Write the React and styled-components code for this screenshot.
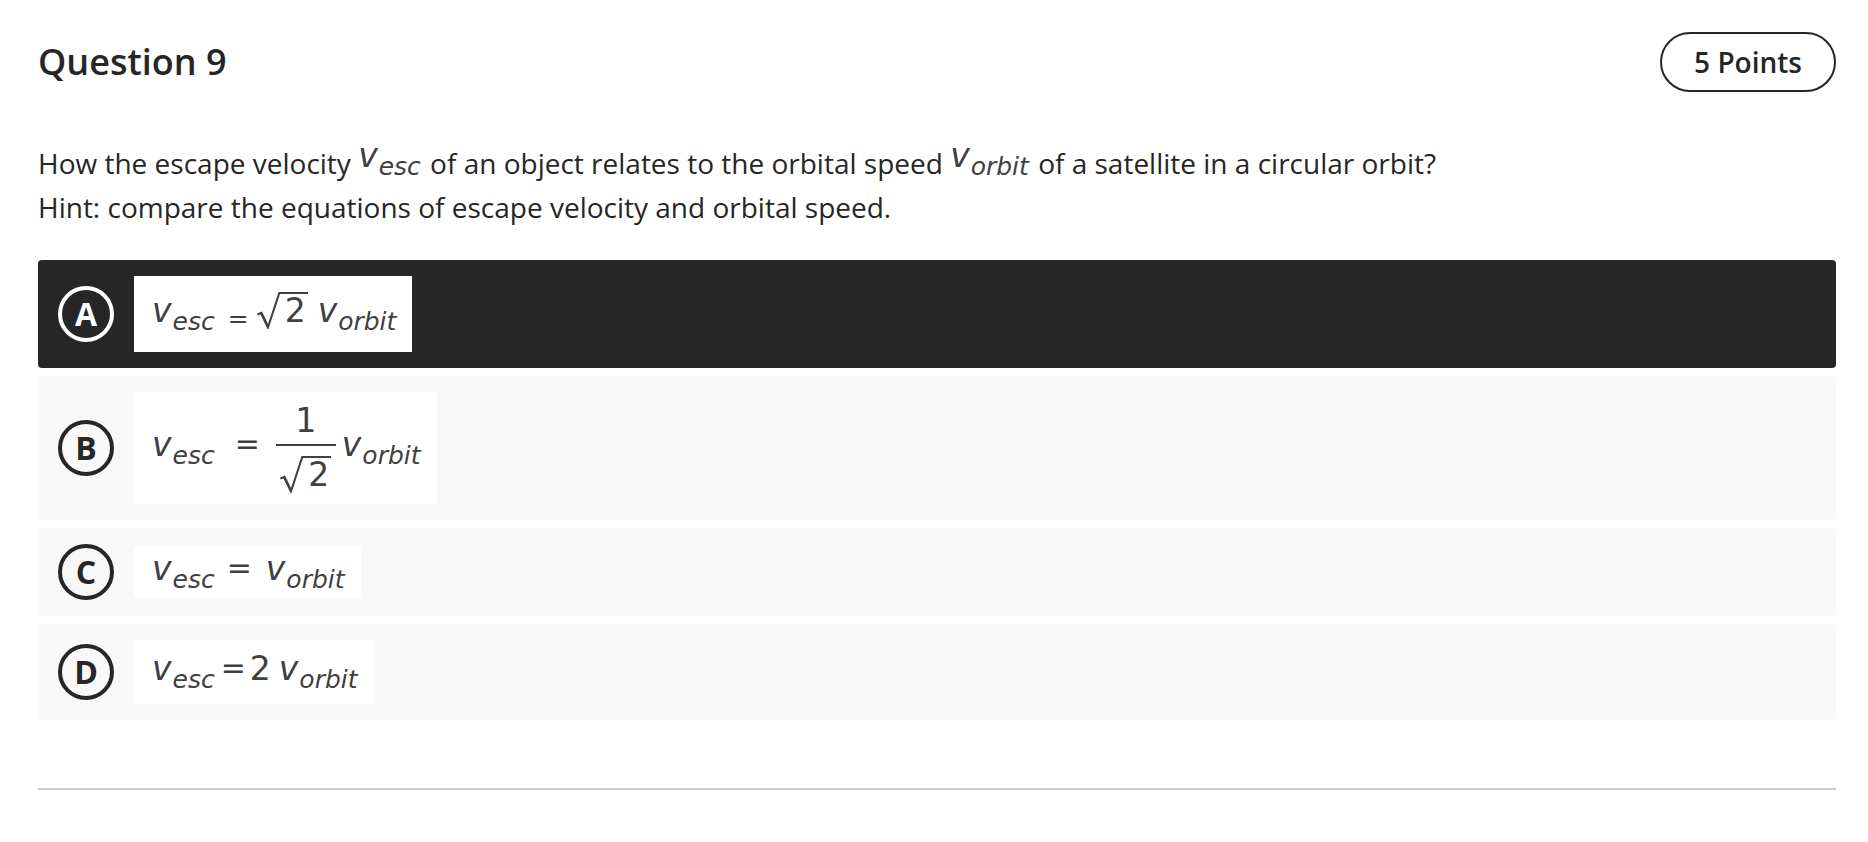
import React, { useState } from 'react';
import styled, { createGlobalStyle, css } from 'styled-components';

const GlobalStyle = createGlobalStyle`
  *, *::before, *::after {
    box-sizing: border-box;
  }

  body {
    margin: 0;
    background: #fff;
    color: #262626;
    font-family: 'Open Sans', 'Noto Sans', sans-serif;
    font-size: 28px;
    line-height: 44px;
  }
`;

const Page = styled.main`
  padding: 32px 32px 52px 38px;
`;

const Header = styled.header`
  display: flex;
  align-items: center;
  justify-content: space-between;
  margin-bottom: 49px;
`;

const Title = styled.h1`
  margin: 0;
  font-size: 36px;
  font-weight: 600;
`;

const Points = styled.div`
  padding: 6px 32px;
  border: 2px solid #262626;
  border-radius: 30px;
  font-weight: 600;
`;

const Prompt = styled.p`
  margin: 0 0 31px;
`;

const Choices = styled.fieldset`
  display: flex;
  flex-direction: column;
  gap: 8px;
  min-width: 0;
  margin: 0;
  padding: 0 0 68px;
  border: 0;
  border-bottom: 2px solid #ccc;
`;

const Choice = styled.label`
  position: relative;
  display: flex;
  align-items: center;
  gap: 20px;
  padding: 16px 20px;
  border-radius: 4px;
  background: ${props => (props.$selected ? '#262626' : '#f8f8f8')};
  color: ${props => (props.$selected ? '#fff' : '#262626')};
  cursor: pointer;
`;

const Radio = styled.input`
  position: absolute;
  opacity: 0;
`;

const Letter = styled.span`
  display: flex;
  align-items: center;
  justify-content: center;
  flex: none;
  width: 56px;
  height: 56px;
  border: 4px solid currentColor;
  border-radius: 50%;
  font-size: 32px;
  font-weight: 700;
`;

const mathFont = css`
  color: #404040;
  font-family: 'DejaVu Sans', sans-serif;
  font-size: 33px;
`;

const Formula = styled.span`
  ${mathFont}
  display: flex;
  align-items: center;
  padding: ${props => props.$space}px 16px ${props => props.$space + 8}px 18px;
  background: #fff;
  line-height: 40px;
  white-space: nowrap;
`;

const Term = styled.span`
  margin-left: ${props => props.$gap || 0}px;
  padding-top: 2px;
  line-height: 38px;
`;

const Sign = styled.span`
  margin-left: ${props => props.$gap}px;
  font-size: 30px;
`;

const Sub = styled.sub`
  margin-left: 1px;
  font-size: 25px;
  line-height: 0;
  vertical-align: -8px;
`;

const SmallSign = styled(Sub)`
  margin-left: 13px;
  vertical-align: -5px;
`;

// in running text the subscript sits on the baseline and the v is raised
const InlineVariable = styled.var`
  ${mathFont}
  margin-right: 2px;
  line-height: 0;
  vertical-align: 7px;
`;

const Root = styled.span`
  display: flex;
  height: 36px;
  margin-left: ${props => props.$gap || 0}px;
  line-height: 34px;
`;

const RootSign = styled.svg`
  flex: none;
  width: 24px;
  height: 38px;
  fill: currentColor;
`;

const Radicand = styled.span`
  padding: 0 2px 0 4px;
  border-top: 2px solid currentColor;
`;

const Fraction = styled.span`
  display: flex;
  flex-direction: column;
  align-items: center;
  height: 80px;
  margin: 0 6px 0 16px;
`;

const Numerator = styled.span`
  width: 60px;
  padding-bottom: 6px;
  border-bottom: 2px solid currentColor;
  line-height: 34px;
  text-align: center;
`;

const Denominator = styled.span`
  padding-top: 10px;
`;

const Esc = ({ gap }) => (
  <Term as="var" $gap={gap}>v<Sub>esc</Sub></Term>
);

const Orbit = ({ gap }) => (
  <Term as="var" $gap={gap}>v<Sub>orbit</Sub></Term>
);

const SquareRoot = ({ children, gap }) => (
  <Root $gap={gap}>
    <RootSign viewBox="0 0 24 38" aria-hidden="true">
      <path d="M0 21.5 L5 19.5 L11 32 L21.5 0 H24 V2 H23 L11.5 37 H10.5 L3.5 22.5 L0.7 23.5 Z" />
    </RootSign>
    <Radicand>{children}</Radicand>
  </Root>
);

const choices = [
  {
    id: 'A',
    space: 14,
    formula: (
      <>
        <Esc />
        <Term><SmallSign>=</SmallSign></Term>
        <SquareRoot gap={8}>2</SquareRoot>
        <Orbit gap={10} />
      </>
    ),
  },
  {
    id: 'B',
    space: 12,
    formula: (
      <>
        <Esc />
        <Sign $gap={20}>=</Sign>
        <Fraction>
          <Numerator>1</Numerator>
          <Denominator><SquareRoot>2</SquareRoot></Denominator>
        </Fraction>
        <Orbit />
      </>
    ),
  },
  {
    id: 'C',
    space: 2,
    formula: (
      <>
        <Esc />
        <Sign $gap={12}>=</Sign>
        <Orbit gap={14} />
      </>
    ),
  },
  {
    id: 'D',
    space: 8,
    formula: (
      <>
        <Esc />
        <Sign $gap={6}>=</Sign>
        <Term $gap={4}>2</Term>
        <Orbit gap={8} />
      </>
    ),
  },
];

const App = () => {
  const [answer, setAnswer] = useState('A');

  return (
    <>
      <GlobalStyle />
      <Page>
        <Header>
          <Title>Question 9</Title>
          <Points>5 Points</Points>
        </Header>
        <Prompt id="prompt">
          How the escape velocity <InlineVariable>v<Sub>esc</Sub></InlineVariable> of an object
          relates to the orbital speed <InlineVariable>v<Sub>orbit</Sub></InlineVariable> of a
          satellite in a circular orbit?
          <br />
          Hint: compare the equations of escape velocity and orbital speed.
        </Prompt>
        <Choices aria-labelledby="prompt">
          {choices.map(({ id, space, formula }) => (
            <Choice key={id} $selected={answer === id}>
              <Radio
                type="radio"
                name="answer"
                value={id}
                checked={answer === id}
                onChange={() => setAnswer(id)}
              />
              <Letter>{id}</Letter>
              <Formula $space={space}>{formula}</Formula>
            </Choice>
          ))}
        </Choices>
      </Page>
    </>
  );
};

export default App;
